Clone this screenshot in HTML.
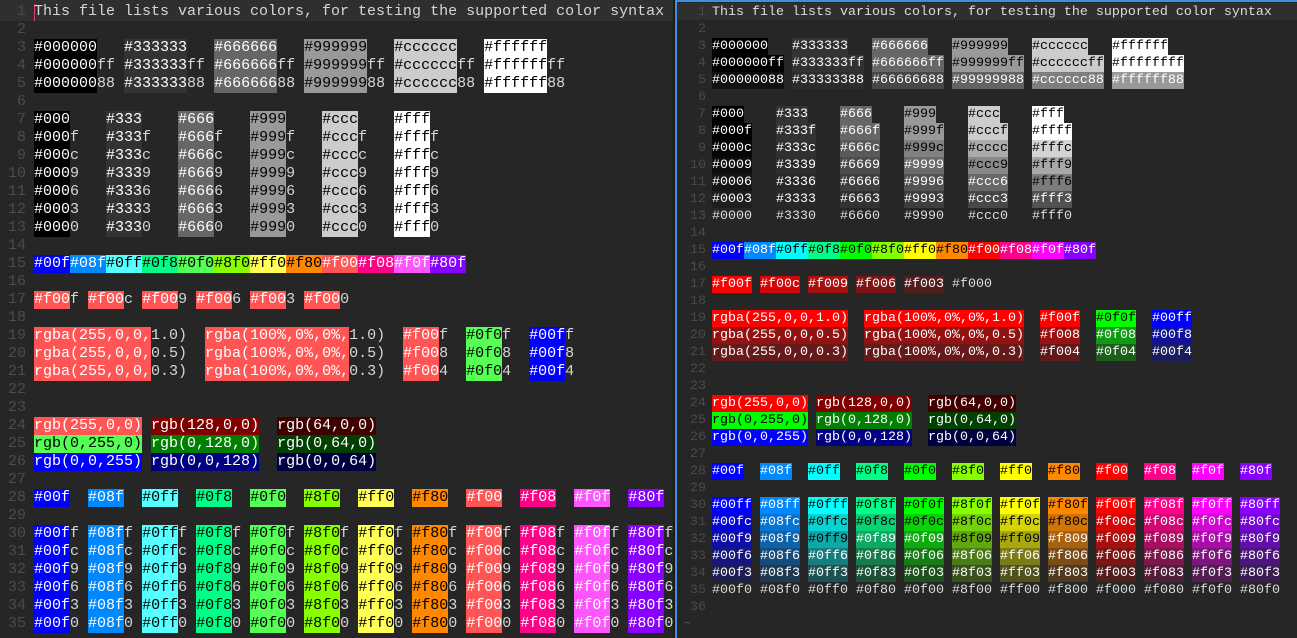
<!DOCTYPE html>
<html><head><meta charset="utf-8"><style>
*{margin:0;padding:0;box-sizing:border-box}
html,body{width:1297px;height:638px;overflow:hidden;background:#262626}
i{font-style:normal;display:inline-block;vertical-align:top}
.P{position:absolute;top:0;bottom:0;background:#262626;overflow:hidden}
.L{left:0;width:673px;font:15px "Liberation Mono",monospace;color:#d6d6d6;padding-top:3px}
.R{left:675px;right:0;font:13.33px "Liberation Mono",monospace;color:#dcdcdc;padding-top:2px;border-left:2px solid #3b8fe4;border-top:2px solid #3b8fe4}
.sep{position:absolute;left:673px;width:2px;top:0;bottom:0;background:#1b1b1b}
.l{position:relative;white-space:pre}
.L .l{height:18px;line-height:18px;padding-left:34px}
.L i{height:18px;line-height:18px}
.R .l{height:17px;line-height:17px;padding-left:35px}
.R i{height:17px;line-height:17px}
.n{position:absolute;left:0;text-align:right}
.L .n{width:26px;color:#4c4c4c}
.R .n{width:29px;color:#4a4a4a}
.hlL{position:absolute;left:0;top:0;width:673px;height:21px;background:#2f2f2f}
.hlR{position:absolute;left:0;right:0;top:1px;height:17px;background:#2f2f2f}
.cur{position:absolute;left:34px;top:4px;width:1px;height:17px;background:#e0407a}
.L .k0{background:#000;color:#fff}.L .k3{background:#333;color:#fff}.L .k6{background:#666;color:#fff}
.L .k9{background:#999;color:#000}.L .kc{background:#ccc;color:#000}.L .kf{background:#fff;color:#000}
.L .B{background:#0000ff;color:#fff}.L .A{background:#0088ff;color:#fff}.L .C{background:#55ffff;color:#000}
.L .G8{background:#00ff88;color:#000}.L .G{background:#55ff55;color:#000}.L .Y8{background:#88ff00;color:#000}
.L .Y{background:#ffff55;color:#000}.L .O{background:#ff8800;color:#000}.L .R0{background:#ff5555;color:#fff}
.L .Pk{background:#ff0088;color:#fff}.L .M{background:#ff55ff;color:#fff}.L .V{background:#8800ff;color:#fff}
.L .r128{background:#800000;color:#fff}.L .r64{background:#400000;color:#fff}
.L .g128{background:#008000;color:#fff}.L .g64{background:#004000;color:#fff}
.L .b128{background:#000080;color:#fff}.L .b64{background:#000040;color:#fff}
.R i{background:rgba(var(--c),var(--a,1))}
.R .k0{--c:0,0,0;color:#fff}.R .k3{--c:51,51,51;color:#fff}.R .k6{--c:102,102,102;color:#fff}
.R .k9{--c:153,153,153;color:#000}.R .kc{--c:204,204,204;color:#000}.R .kf{--c:255,255,255;color:#000}
.R .B{--c:0,0,255;color:#fff}.R .A{--c:0,136,255;color:#fff}.R .C{--c:0,255,255;color:#000}
.R .G8{--c:0,255,136;color:#000}.R .G{--c:0,255,0;color:#000}.R .Y8{--c:136,255,0;color:#000}
.R .Y{--c:255,255,0;color:#000}.R .O{--c:255,136,0;color:#000}.R .R0{--c:255,0,0;color:#fff}
.R .Pk{--c:255,0,136;color:#fff}.R .M{--c:255,0,255;color:#fff}.R .V{--c:136,0,255;color:#fff}
.R .r128{--c:128,0,0;color:#fff}.R .r64{--c:64,0,0;color:#fff}
.R .g128{--c:0,128,0;color:#fff}.R .g64{--c:0,64,0;color:#fff}
.R .b128{--c:0,0,128;color:#fff}.R .b64{--c:0,0,64;color:#fff}
.R .w i,.R i.w{color:#fff}
.R .z i,.R i.z{color:#dcdcdc}
.tl{position:absolute;left:6px;top:614px;color:#555;font:13px "Liberation Mono",monospace}
</style></head><body>
<div class="P L">
<div class="hlL"></div><div class="cur"></div>
<div class="l"><span class="n">1</span>This file lists various colors, for testing the supported color syntax</div>
<div class="l"><span class="n">2</span></div>
<div class="l"><span class="n">3</span><i class="k0">#000000</i>   <i class="k3">#333333</i>   <i class="k6">#666666</i>   <i class="k9">#999999</i>   <i class="kc">#cccccc</i>   <i class="kf">#ffffff</i></div>
<div class="l"><span class="n">4</span><i class="k0">#000000</i>ff <i class="k3">#333333</i>ff <i class="k6">#666666</i>ff <i class="k9">#999999</i>ff <i class="kc">#cccccc</i>ff <i class="kf">#ffffff</i>ff</div>
<div class="l"><span class="n">5</span><i class="k0">#000000</i>88 <i class="k3">#333333</i>88 <i class="k6">#666666</i>88 <i class="k9">#999999</i>88 <i class="kc">#cccccc</i>88 <i class="kf">#ffffff</i>88</div>
<div class="l"><span class="n">6</span></div>
<div class="l"><span class="n">7</span><i class="k0">#000</i>    <i class="k3">#333</i>    <i class="k6">#666</i>    <i class="k9">#999</i>    <i class="kc">#ccc</i>    <i class="kf">#fff</i></div>
<div class="l"><span class="n">8</span><i class="k0">#000</i>f   <i class="k3">#333</i>f   <i class="k6">#666</i>f   <i class="k9">#999</i>f   <i class="kc">#ccc</i>f   <i class="kf">#fff</i>f</div>
<div class="l"><span class="n">9</span><i class="k0">#000</i>c   <i class="k3">#333</i>c   <i class="k6">#666</i>c   <i class="k9">#999</i>c   <i class="kc">#ccc</i>c   <i class="kf">#fff</i>c</div>
<div class="l"><span class="n">10</span><i class="k0">#000</i>9   <i class="k3">#333</i>9   <i class="k6">#666</i>9   <i class="k9">#999</i>9   <i class="kc">#ccc</i>9   <i class="kf">#fff</i>9</div>
<div class="l"><span class="n">11</span><i class="k0">#000</i>6   <i class="k3">#333</i>6   <i class="k6">#666</i>6   <i class="k9">#999</i>6   <i class="kc">#ccc</i>6   <i class="kf">#fff</i>6</div>
<div class="l"><span class="n">12</span><i class="k0">#000</i>3   <i class="k3">#333</i>3   <i class="k6">#666</i>3   <i class="k9">#999</i>3   <i class="kc">#ccc</i>3   <i class="kf">#fff</i>3</div>
<div class="l"><span class="n">13</span><i class="k0">#000</i>0   <i class="k3">#333</i>0   <i class="k6">#666</i>0   <i class="k9">#999</i>0   <i class="kc">#ccc</i>0   <i class="kf">#fff</i>0</div>
<div class="l"><span class="n">14</span></div>
<div class="l"><span class="n">15</span><i class="B">#00f</i><i class="A">#08f</i><i class="C">#0ff</i><i class="G8">#0f8</i><i class="G">#0f0</i><i class="Y8">#8f0</i><i class="Y">#ff0</i><i class="O">#f80</i><i class="R0">#f00</i><i class="Pk">#f08</i><i class="M">#f0f</i><i class="V">#80f</i></div>
<div class="l"><span class="n">16</span></div>
<div class="l"><span class="n">17</span><i class="R0">#f00</i>f <i class="R0">#f00</i>c <i class="R0">#f00</i>9 <i class="R0">#f00</i>6 <i class="R0">#f00</i>3 <i class="R0">#f00</i>0</div>
<div class="l"><span class="n">18</span></div>
<div class="l"><span class="n">19</span><i class="R0">rgba(255,0,0,</i>1.0)  <i class="R0">rgba(100%,0%,0%,</i>1.0)  <i class="R0">#f00</i>f  <i class="G">#0f0</i>f  <i class="B">#00f</i>f</div>
<div class="l"><span class="n">20</span><i class="R0">rgba(255,0,0,</i>0.5)  <i class="R0">rgba(100%,0%,0%,</i>0.5)  <i class="R0">#f00</i>8  <i class="G">#0f0</i>8  <i class="B">#00f</i>8</div>
<div class="l"><span class="n">21</span><i class="R0">rgba(255,0,0,</i>0.3)  <i class="R0">rgba(100%,0%,0%,</i>0.3)  <i class="R0">#f00</i>4  <i class="G">#0f0</i>4  <i class="B">#00f</i>4</div>
<div class="l"><span class="n">22</span></div>
<div class="l"><span class="n">23</span></div>
<div class="l"><span class="n">24</span><i class="R0">rgb(255,0,0)</i> <i class="r128">rgb(128,0,0)</i>  <i class="r64">rgb(64,0,0)</i></div>
<div class="l"><span class="n">25</span><i class="G">rgb(0,255,0)</i> <i class="g128">rgb(0,128,0)</i>  <i class="g64">rgb(0,64,0)</i></div>
<div class="l"><span class="n">26</span><i class="B">rgb(0,0,255)</i> <i class="b128">rgb(0,0,128)</i>  <i class="b64">rgb(0,0,64)</i></div>
<div class="l"><span class="n">27</span></div>
<div class="l"><span class="n">28</span><i class="B">#00f</i>  <i class="A">#08f</i>  <i class="C">#0ff</i>  <i class="G8">#0f8</i>  <i class="G">#0f0</i>  <i class="Y8">#8f0</i>  <i class="Y">#ff0</i>  <i class="O">#f80</i>  <i class="R0">#f00</i>  <i class="Pk">#f08</i>  <i class="M">#f0f</i>  <i class="V">#80f</i></div>
<div class="l"><span class="n">29</span></div>
<div class="l"><span class="n">30</span><i class="B">#00f</i>f <i class="A">#08f</i>f <i class="C">#0ff</i>f <i class="G8">#0f8</i>f <i class="G">#0f0</i>f <i class="Y8">#8f0</i>f <i class="Y">#ff0</i>f <i class="O">#f80</i>f <i class="R0">#f00</i>f <i class="Pk">#f08</i>f <i class="M">#f0f</i>f <i class="V">#80f</i>f</div>
<div class="l"><span class="n">31</span><i class="B">#00f</i>c <i class="A">#08f</i>c <i class="C">#0ff</i>c <i class="G8">#0f8</i>c <i class="G">#0f0</i>c <i class="Y8">#8f0</i>c <i class="Y">#ff0</i>c <i class="O">#f80</i>c <i class="R0">#f00</i>c <i class="Pk">#f08</i>c <i class="M">#f0f</i>c <i class="V">#80f</i>c</div>
<div class="l"><span class="n">32</span><i class="B">#00f</i>9 <i class="A">#08f</i>9 <i class="C">#0ff</i>9 <i class="G8">#0f8</i>9 <i class="G">#0f0</i>9 <i class="Y8">#8f0</i>9 <i class="Y">#ff0</i>9 <i class="O">#f80</i>9 <i class="R0">#f00</i>9 <i class="Pk">#f08</i>9 <i class="M">#f0f</i>9 <i class="V">#80f</i>9</div>
<div class="l"><span class="n">33</span><i class="B">#00f</i>6 <i class="A">#08f</i>6 <i class="C">#0ff</i>6 <i class="G8">#0f8</i>6 <i class="G">#0f0</i>6 <i class="Y8">#8f0</i>6 <i class="Y">#ff0</i>6 <i class="O">#f80</i>6 <i class="R0">#f00</i>6 <i class="Pk">#f08</i>6 <i class="M">#f0f</i>6 <i class="V">#80f</i>6</div>
<div class="l"><span class="n">34</span><i class="B">#00f</i>3 <i class="A">#08f</i>3 <i class="C">#0ff</i>3 <i class="G8">#0f8</i>3 <i class="G">#0f0</i>3 <i class="Y8">#8f0</i>3 <i class="Y">#ff0</i>3 <i class="O">#f80</i>3 <i class="R0">#f00</i>3 <i class="Pk">#f08</i>3 <i class="M">#f0f</i>3 <i class="V">#80f</i>3</div>
<div class="l"><span class="n">35</span><i class="B">#00f</i>0 <i class="A">#08f</i>0 <i class="C">#0ff</i>0 <i class="G8">#0f8</i>0 <i class="G">#0f0</i>0 <i class="Y8">#8f0</i>0 <i class="Y">#ff0</i>0 <i class="O">#f80</i>0 <i class="R0">#f00</i>0 <i class="Pk">#f08</i>0 <i class="M">#f0f</i>0 <i class="V">#80f</i>0</div>
</div>
<div class="sep"></div>
<div class="P R">
<div class="hlR"></div>
<div class="l"><span class="n">1</span>This file lists various colors, for testing the supported color syntax</div>
<div class="l"><span class="n">2</span></div>
<div class="l"><span class="n">3</span><i class="k0">#000000</i>   <i class="k3">#333333</i>   <i class="k6">#666666</i>   <i class="k9">#999999</i>   <i class="kc">#cccccc</i>   <i class="kf">#ffffff</i></div>
<div class="l"><span class="n">4</span><i class="k0">#000000ff</i> <i class="k3">#333333ff</i> <i class="k6">#666666ff</i> <i class="k9">#999999ff</i> <i class="kc">#ccccccff</i> <i class="kf">#ffffffff</i></div>
<div class="l w" style="--a:.533"><span class="n">5</span><i class="k0">#00000088</i> <i class="k3">#33333388</i> <i class="k6">#66666688</i> <i class="k9">#99999988</i> <i class="kc">#cccccc88</i> <i class="kf">#ffffff88</i></div>
<div class="l"><span class="n">6</span></div>
<div class="l"><span class="n">7</span><i class="k0">#000</i>    <i class="k3">#333</i>    <i class="k6">#666</i>    <i class="k9">#999</i>    <i class="kc">#ccc</i>    <i class="kf">#fff</i></div>
<div class="l"><span class="n">8</span><i class="k0">#000f</i>   <i class="k3">#333f</i>   <i class="k6">#666f</i>   <i class="k9">#999f</i>   <i class="kc">#cccf</i>   <i class="kf">#ffff</i></div>
<div class="l" style="--a:.8"><span class="n">9</span><i class="k0">#000c</i>   <i class="k3">#333c</i>   <i class="k6">#666c</i>   <i class="k9">#999c</i>   <i class="kc">#cccc</i>   <i class="kf">#fffc</i></div>
<div class="l" style="--a:.6"><span class="n">10</span><i class="k0">#0009</i>   <i class="k3">#3339</i>   <i class="k6">#6669</i>   <i class="k9 w">#9999</i>   <i class="kc">#ccc9</i>   <i class="kf">#fff9</i></div>
<div class="l" style="--a:.4"><span class="n">11</span><i class="k0">#0006</i>   <i class="k3">#3336</i>   <i class="k6">#6666</i>   <i class="k9 w">#9996</i>   <i class="kc w">#ccc6</i>   <i class="kf">#fff6</i></div>
<div class="l w" style="--a:.2"><span class="n">12</span><i class="k0">#0003</i>   <i class="k3">#3333</i>   <i class="k6">#6663</i>   <i class="k9">#9993</i>   <i class="kc">#ccc3</i>   <i class="kf">#fff3</i></div>
<div class="l z" style="--a:0"><span class="n">13</span><i class="k0">#0000</i>   <i class="k3">#3330</i>   <i class="k6">#6660</i>   <i class="k9">#9990</i>   <i class="kc">#ccc0</i>   <i class="kf">#fff0</i></div>
<div class="l"><span class="n">14</span></div>
<div class="l"><span class="n">15</span><i class="B">#00f</i><i class="A">#08f</i><i class="C">#0ff</i><i class="G8">#0f8</i><i class="G">#0f0</i><i class="Y8">#8f0</i><i class="Y">#ff0</i><i class="O">#f80</i><i class="R0">#f00</i><i class="Pk">#f08</i><i class="M">#f0f</i><i class="V">#80f</i></div>
<div class="l"><span class="n">16</span></div>
<div class="l"><span class="n">17</span><i class="R0">#f00f</i> <i class="R0" style="--a:.8">#f00c</i> <i class="R0" style="--a:.6">#f009</i> <i class="R0" style="--a:.4">#f006</i> <i class="R0" style="--a:.2">#f003</i> <i class="R0 z" style="--a:0">#f000</i></div>
<div class="l"><span class="n">18</span></div>
<div class="l"><span class="n">19</span><i class="R0">rgba(255,0,0,1.0)</i>  <i class="R0">rgba(100%,0%,0%,1.0)</i>  <i class="R0">#f00f</i>  <i class="G">#0f0f</i>  <i class="B">#00ff</i></div>
<div class="l w"><span class="n">20</span><i class="R0" style="--a:.5">rgba(255,0,0,0.5)</i>  <i class="R0" style="--a:.5">rgba(100%,0%,0%,0.5)</i>  <i class="R0" style="--a:.533">#f008</i>  <i class="G" style="--a:.533">#0f08</i>  <i class="B" style="--a:.533">#00f8</i></div>
<div class="l w"><span class="n">21</span><i class="R0" style="--a:.3">rgba(255,0,0,0.3)</i>  <i class="R0" style="--a:.3">rgba(100%,0%,0%,0.3)</i>  <i class="R0" style="--a:.267">#f004</i>  <i class="G" style="--a:.267">#0f04</i>  <i class="B" style="--a:.267">#00f4</i></div>
<div class="l"><span class="n">22</span></div>
<div class="l"><span class="n">23</span></div>
<div class="l"><span class="n">24</span><i class="R0">rgb(255,0,0)</i> <i class="r128">rgb(128,0,0)</i>  <i class="r64">rgb(64,0,0)</i></div>
<div class="l"><span class="n">25</span><i class="G">rgb(0,255,0)</i> <i class="g128">rgb(0,128,0)</i>  <i class="g64">rgb(0,64,0)</i></div>
<div class="l"><span class="n">26</span><i class="B">rgb(0,0,255)</i> <i class="b128">rgb(0,0,128)</i>  <i class="b64">rgb(0,0,64)</i></div>
<div class="l"><span class="n">27</span></div>
<div class="l"><span class="n">28</span><i class="B">#00f</i>  <i class="A">#08f</i>  <i class="C">#0ff</i>  <i class="G8">#0f8</i>  <i class="G">#0f0</i>  <i class="Y8">#8f0</i>  <i class="Y">#ff0</i>  <i class="O">#f80</i>  <i class="R0">#f00</i>  <i class="Pk">#f08</i>  <i class="M">#f0f</i>  <i class="V">#80f</i></div>
<div class="l"><span class="n">29</span></div>
<div class="l"><span class="n">30</span><i class="B">#00ff</i> <i class="A">#08ff</i> <i class="C">#0fff</i> <i class="G8">#0f8f</i> <i class="G">#0f0f</i> <i class="Y8">#8f0f</i> <i class="Y">#ff0f</i> <i class="O">#f80f</i> <i class="R0">#f00f</i> <i class="Pk">#f08f</i> <i class="M">#f0ff</i> <i class="V">#80ff</i></div>
<div class="l" style="--a:.8"><span class="n">31</span><i class="B">#00fc</i> <i class="A">#08fc</i> <i class="C">#0ffc</i> <i class="G8">#0f8c</i> <i class="G">#0f0c</i> <i class="Y8">#8f0c</i> <i class="Y">#ff0c</i> <i class="O">#f80c</i> <i class="R0">#f00c</i> <i class="Pk">#f08c</i> <i class="M">#f0fc</i> <i class="V">#80fc</i></div>
<div class="l" style="--a:.6"><span class="n">32</span><i class="B">#00f9</i> <i class="A">#08f9</i> <i class="C">#0ff9</i> <i class="G8 w">#0f89</i> <i class="G w">#0f09</i> <i class="Y8">#8f09</i> <i class="Y">#ff09</i> <i class="O w">#f809</i> <i class="R0">#f009</i> <i class="Pk">#f089</i> <i class="M">#f0f9</i> <i class="V">#80f9</i></div>
<div class="l w" style="--a:.4"><span class="n">33</span><i class="B">#00f6</i> <i class="A">#08f6</i> <i class="C">#0ff6</i> <i class="G8">#0f86</i> <i class="G">#0f06</i> <i class="Y8">#8f06</i> <i class="Y">#ff06</i> <i class="O">#f806</i> <i class="R0">#f006</i> <i class="Pk">#f086</i> <i class="M">#f0f6</i> <i class="V">#80f6</i></div>
<div class="l w" style="--a:.2"><span class="n">34</span><i class="B">#00f3</i> <i class="A">#08f3</i> <i class="C">#0ff3</i> <i class="G8">#0f83</i> <i class="G">#0f03</i> <i class="Y8">#8f03</i> <i class="Y">#ff03</i> <i class="O">#f803</i> <i class="R0">#f003</i> <i class="Pk">#f083</i> <i class="M">#f0f3</i> <i class="V">#80f3</i></div>
<div class="l z" style="--a:0"><span class="n">35</span><i class="B">#00f0</i> <i class="A">#08f0</i> <i class="C">#0ff0</i> <i class="G8">#0f80</i> <i class="G">#0f00</i> <i class="Y8">#8f00</i> <i class="Y">#ff00</i> <i class="O">#f800</i> <i class="R0">#f000</i> <i class="Pk">#f080</i> <i class="M">#f0f0</i> <i class="V">#80f0</i></div>
<div class="l"><span class="n">36</span></div>
<div class="tl">~</div>
</div>
</body></html>
